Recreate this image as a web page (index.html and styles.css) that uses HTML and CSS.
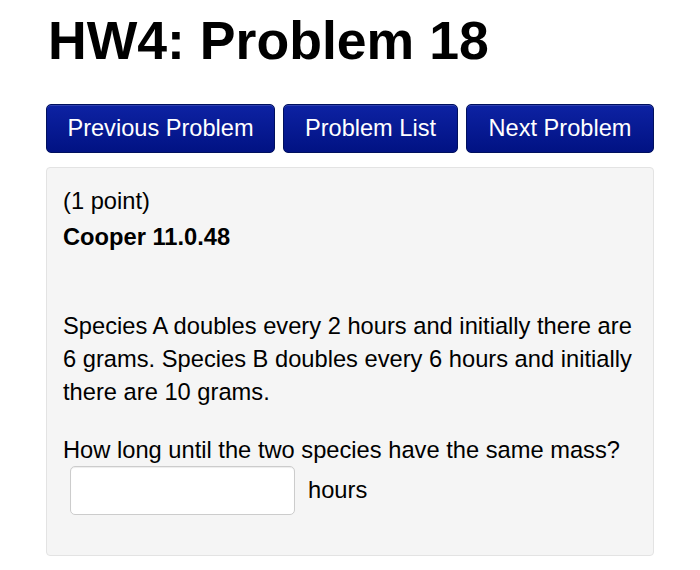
FILE: index.html
```html
<!DOCTYPE html>
<html>
<head>
<meta charset="utf-8">
<link rel="stylesheet" href="styles.css">
</head>
<body>
<div class="page">
  <h1 class="title">HW4: Problem 18</h1>
  <div class="nav">
    <a class="btn btn-prev">Previous Problem</a>
    <a class="btn btn-list">Problem List</a>
    <a class="btn btn-next">Next Problem</a>
  </div>
  <div class="problem">
    <div class="points">(1 point)</div>
    <div class="source">Cooper 11.0.48</div>
    <p class="statement">Species A doubles every 2 hours and initially there are 6 grams. Species B doubles every 6 hours and initially there are 10 grams.</p>
    <p class="question">How long until the two species have the same mass?</p>
    <div class="answer-row">
      <input class="answer" type="text">
      <span class="unit">hours</span>
    </div>
  </div>
</div>
</body>
</html>
```
FILE: styles.css
```css
html, body {
  margin: 0;
  padding: 0;
  background: #ffffff;
}
body {
  font-family: "Liberation Sans", Arial, Helvetica, sans-serif;
  color: #000;
}
.page {
  width: 608px;
  padding-left: 46px;
}
.title {
  margin: 10px 0 0 2px;
  font-size: 53.6px;
  line-height: 60px;
  font-weight: bold;
}
.nav {
  display: flex;
  gap: 8px;
  margin-top: 34px;
}
.btn {
  display: block;
  box-sizing: border-box;
  height: 49px;
  padding: 10px 0;
  font-size: 23.6px;
  line-height: 27px;
  color: #fff;
  text-align: center;
  border: 1px solid #00105e;
  border-radius: 5px;
  background: linear-gradient(#0d22a3, #011283);
  box-shadow: inset 0 1px 0 rgba(255,255,255,0.15);
}
.btn-prev { width: 229px; }
.btn-list { width: 175px; }
.btn-next { width: 188px; }
.problem {
  margin-top: 14px;
  box-sizing: border-box;
  width: 608px;
  height: 389px;
  padding: 17px 14px 0 16px;
  background: #f5f5f5;
  border: 1px solid #e3e3e3;
  border-radius: 4px;
  font-size: 23.7px;
  line-height: 33px;
}
.source {
  font-weight: bold;
  margin-top: 3px;
}
.statement {
  margin: 56px 0 0 0;
}
.question {
  margin: 25px 0 0 0;
}
.answer-row {
  display: flex;
  align-items: center;
  gap: 13px;
  margin-top: -1px;
  padding-left: 7px;
}
.answer {
  box-sizing: border-box;
  width: 225px;
  height: 49px;
  margin: 0;
  background: #fff;
  border: 1px solid #cccccc;
  border-radius: 5px;
  box-shadow: inset 0 1px 1px rgba(0,0,0,0.075);
  font-size: 20px;
}
```
